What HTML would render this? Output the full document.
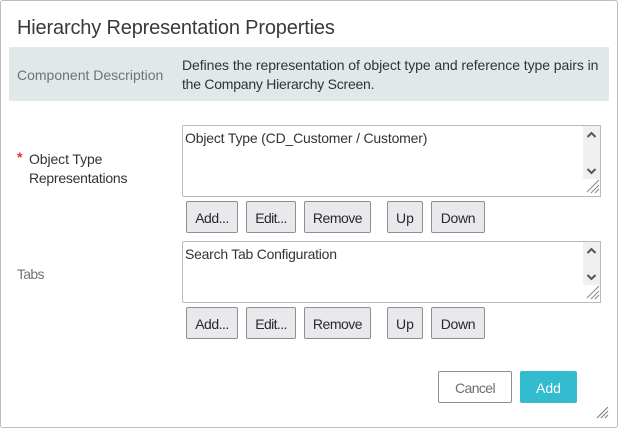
<!DOCTYPE html>
<html><head><meta charset="utf-8">
<style>
html,body{margin:0;padding:0;background:#fff}
body{width:618px;height:428px;position:relative;overflow:hidden;font-family:"Liberation Sans",sans-serif;font-size:14px;color:#333}
div{position:absolute;box-sizing:border-box}
.t{white-space:nowrap;line-height:19px}
.dlg{left:0;top:0;width:618px;height:428px;border:1px solid #bcbcbc;border-radius:3px}
.band{left:9px;top:47px;width:600px;height:54px;background:#e0e8ea}
.ta{left:182px;width:419px;border:1px solid #bababa;border-radius:2px 0 0 2px;background:#fff}
.sb{width:17px;background:#f0f0f0}
.b{height:32px;border:1px solid #8e8e8e;border-radius:2px;background:#e9e9ed;text-align:center;line-height:32px;color:#2a2a2a}
.lbl{color:#6e7479}
.add{letter-spacing:-.5px}
.edit{letter-spacing:-.6px}
.rem{letter-spacing:-.5px}
.dn{letter-spacing:-.3px}
</style></head>
<body>
<div class="dlg"></div>
<div class="t" style="left:17px;top:16px;font-size:20px;line-height:24px;color:#3a3a3a;letter-spacing:-.166px">Hierarchy Representation Properties</div>
<div class="band"></div>
<div class="t lbl" style="left:17px;top:66px">Component Description</div>
<div class="t" style="left:182px;top:56px;letter-spacing:-.068px">Defines the representation of object type and reference type pairs in</div>
<div class="t" style="left:182px;top:75px;letter-spacing:-.24px">the Company Hierarchy Screen.</div>

<div class="t" style="left:17px;top:148px;color:#e2303c;font-weight:bold">*</div>
<div class="t" style="left:29px;top:150px;letter-spacing:-.1px">Object Type</div>
<div class="t" style="left:29px;top:169px;letter-spacing:-.25px">Representations</div>
<div class="t lbl" style="left:17px;top:265px;letter-spacing:-.7px">Tabs</div>

<div class="ta" style="top:125px;height:72px"></div>
<div class="t" style="left:185px;top:129px;letter-spacing:-.18px">Object Type (CD_Customer / Customer)</div>
<div class="sb" style="left:583px;top:126px;height:53px"></div>
<svg style="position:absolute;left:583px;top:126px" width="17" height="70" fill="none" stroke="#555" stroke-width="2">
<path d="M4.5 11 8.5 7 12.5 11M4.5 43 8.5 47 12.5 43"/>
<path d="M4 66 16 54M8 67 16 59M12 67 16 63" stroke="#888" stroke-width="1"/>
</svg>

<div class="ta" style="top:241px;height:62px"></div>
<div class="t" style="left:185px;top:245px;letter-spacing:-.25px">Search Tab Configuration</div>
<div class="sb" style="left:583px;top:242px;height:43px"></div>
<svg style="position:absolute;left:583px;top:242px" width="17" height="60" fill="none" stroke="#555" stroke-width="2">
<path d="M4.5 11 8.5 7 12.5 11M4.5 33 8.5 37 12.5 33"/>
<path d="M4 56 16 44M8 57 16 49M12 57 16 53" stroke="#888" stroke-width="1"/>
</svg>

<div class="b add" style="left:186px;top:201px;width:52px">Add...</div>
<div class="b edit" style="left:246px;top:201px;width:50px">Edit...</div>
<div class="b rem" style="left:304px;top:201px;width:67px">Remove</div>
<div class="b" style="left:387px;top:201px;width:36px">Up</div>
<div class="b dn" style="left:431px;top:201px;width:54px">Down</div>

<div class="b add" style="left:186px;top:307px;width:52px">Add...</div>
<div class="b edit" style="left:246px;top:307px;width:50px">Edit...</div>
<div class="b rem" style="left:304px;top:307px;width:67px">Remove</div>
<div class="b" style="left:387px;top:307px;width:36px">Up</div>
<div class="b dn" style="left:431px;top:307px;width:54px">Down</div>

<div class="b" style="left:438px;top:371px;width:74px;background:#fff;color:#6e6e6e;letter-spacing:-.6px">Cancel</div>
<div class="b" style="left:520px;top:371px;width:57px;background:#33bbcf;border-color:#33bbcf;color:#fff">Add</div>

<svg style="position:absolute;left:596px;top:405px" width="14" height="14" fill="none" stroke="#777" stroke-width="1">
<path d="M1 13 12 2M5 13 12 6M9 13 12 10"/>
</svg>
</body></html>
